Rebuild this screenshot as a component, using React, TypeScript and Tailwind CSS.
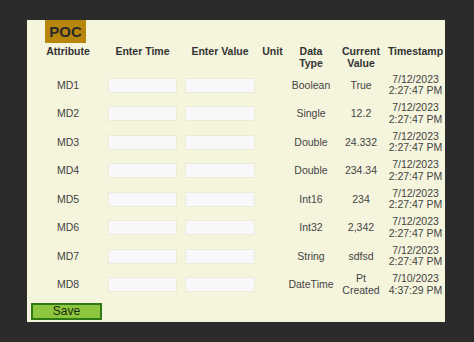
import React from "react";

interface Row {
  name: string;
  type: string;
  value: string[];
  date: string;
  time: string;
}

const ROWS: Row[] = [
  { name: "MD1", type: "Boolean", value: ["True"], date: "7/12/2023", time: "2:27:47 PM" },
  { name: "MD2", type: "Single", value: ["12.2"], date: "7/12/2023", time: "2:27:47 PM" },
  { name: "MD3", type: "Double", value: ["24.332"], date: "7/12/2023", time: "2:27:47 PM" },
  { name: "MD4", type: "Double", value: ["234.34"], date: "7/12/2023", time: "2:27:47 PM" },
  { name: "MD5", type: "Int16", value: ["234"], date: "7/12/2023", time: "2:27:47 PM" },
  { name: "MD6", type: "Int32", value: ["2,342"], date: "7/12/2023", time: "2:27:47 PM" },
  { name: "MD7", type: "String", value: ["sdfsd"], date: "7/12/2023", time: "2:27:47 PM" },
  { name: "MD8", type: "DateTime", value: ["Pt", "Created"], date: "7/10/2023", time: "4:37:29 PM" },
];

// column widths measured off the screenshot
const cols = "grid grid-cols-[72px_77px_78px_27px_50px_50px_59px]";

const App: React.FC = () => {
  return (
    <div
      className="w-[474px] h-[342px] bg-[#2b2b2b] pt-[20px] pl-[27px]"
      style={{ fontFamily: '"Liberation Sans", Arial, sans-serif' }}
    >
      <div className="w-[418px] h-[302px] bg-[#f5f4dc] flex flex-col text-[10.5px] leading-[11.5px] text-[#444]">
        <div className="ml-[18px] w-[41px] h-[23px] bg-[#b8860b] flex items-center justify-center text-[15px] font-bold text-[#2a2a2a]">
          POC
        </div>

        <div className={`${cols} pl-[5px] mt-[3px] h-[25px] items-start text-center font-bold text-[#333]`}>
          <div>Attribute</div>
          <div>Enter Time</div>
          <div>Enter Value</div>
          <div>Unit</div>
          <div>Data<br />Type</div>
          <div>Current<br />Value</div>
          <div>Timestamp</div>
        </div>

        {ROWS.map((r) => (
          <div key={r.name} className={`${cols} pl-[5px] h-[28.5px] items-center text-center`}>
            <div>{r.name}</div>
            <div className="flex justify-center">
              <input className="w-[69px] h-[15px] bg-[#f8f8fa] border border-[#ecebd8] outline-none" />
            </div>
            <div className="flex justify-center">
              <input className="w-[70px] h-[15px] bg-[#f8f8fa] border border-[#ecebd8] outline-none" />
            </div>
            <div></div>
            <div>{r.type}</div>
            <div>
              {r.value.map((v) => (
                <div key={v}>{v}</div>
              ))}
            </div>
            <div>
              <div>{r.date}</div>
              <div>{r.time}</div>
            </div>
          </div>
        ))}

        <button className="ml-[4px] mt-[3.5px] w-[71px] h-[17px] bg-[#8dc63f] border-2 border-[#2f7a14] text-[12px] leading-none text-[#1e2a10] flex items-center justify-center">
          Save
        </button>
      </div>
    </div>
  );
};

export default App;
